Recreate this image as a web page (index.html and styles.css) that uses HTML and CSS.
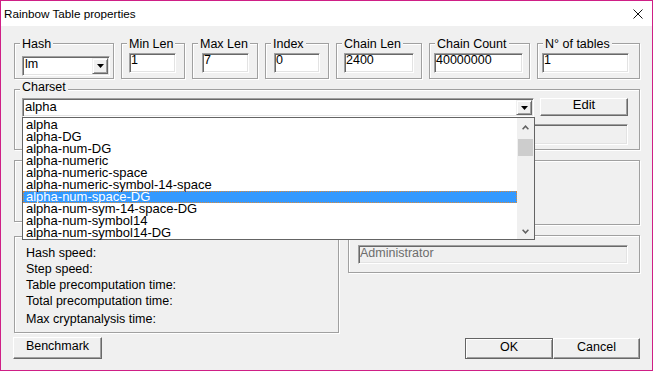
FILE: index.html
```html
<!DOCTYPE html>
<html>
<head>
<meta charset="utf-8">
<title>Rainbow Table properties</title>
<link rel="stylesheet" href="styles.css">
</head>
<body>
<div class="window">
  <div class="titlebar">
    <span class="title">Rainbow Table properties</span>
    <svg class="close" width="10" height="10" viewBox="0 0 10 10"><path d="M0.5 0.5 L9.5 9.5 M9.5 0.5 L0.5 9.5" stroke="#111" stroke-width="1" fill="none"/></svg>
  </div>
  <div class="content">
    <div class="params">
      <div class="group pgroup">
        <div class="legend">Hash</div>
        <div class="combo combo-hash">
          <span class="combo-text">lm</span>
          <span class="drop-btn"><svg width="7" height="4" viewBox="0 0 7 4"><path d="M0 0 H7 L3.5 4 Z" fill="#000"/></svg></span>
        </div>
      </div>
      <div class="group pgroup">
        <div class="legend">Min Len</div>
        <div class="field f-min">1</div>
      </div>
      <div class="group pgroup">
        <div class="legend">Max Len</div>
        <div class="field f-max">7</div>
      </div>
      <div class="group pgroup">
        <div class="legend">Index</div>
        <div class="field f-index">0</div>
      </div>
      <div class="group pgroup">
        <div class="legend">Chain Len</div>
        <div class="field f-chainlen">2400</div>
      </div>
      <div class="group pgroup">
        <div class="legend">Chain Count</div>
        <div class="field f-chaincount">40000000</div>
      </div>
      <div class="group pgroup">
        <div class="legend">N° of tables</div>
        <div class="field f-tables">1</div>
      </div>
    </div>

    <div class="group charset">
      <div class="legend legend-charset">Charset</div>
      <div class="charset-row">
        <div class="combo combo-charset">
          <span class="combo-text">alpha</span>
          <span class="drop-btn"><svg width="7" height="4" viewBox="0 0 7 4"><path d="M0 0 H7 L3.5 4 Z" fill="#000"/></svg></span>
          <div class="droplist">
            <div class="items">
              <div class="item">alpha</div>
              <div class="item">alpha-DG</div>
              <div class="item">alpha-num-DG</div>
              <div class="item">alpha-numeric</div>
              <div class="item">alpha-numeric-space</div>
              <div class="item">alpha-numeric-symbol-14-space</div>
              <div class="item sel">alpha-num-space-DG</div>
              <div class="item">alpha-num-sym-14-space-DG</div>
              <div class="item">alpha-num-symbol14</div>
              <div class="item">alpha-num-symbol14-DG</div>
            </div>
            <div class="scrollbar">
              <div class="sb-btn sb-up"><svg width="7" height="5" viewBox="0 0 7 5"><polyline points="0.6,4.2 3.5,1.2 6.4,4.2" fill="none" stroke="#606060" stroke-width="1.5"/></svg></div>
              <div class="thumb"></div>
              <div class="sb-btn sb-down"><svg width="7" height="5" viewBox="0 0 7 5"><polyline points="0.6,0.8 3.5,3.8 6.4,0.8" fill="none" stroke="#606060" stroke-width="1.5"/></svg></div>
            </div>
          </div>
        </div>
        <div class="btn btn-edit">Edit</div>
      </div>
      <div class="field readonly info-field"></div>
    </div>

    <div class="lower">
      <div class="col col-left">
        <div class="group box-a"></div>
        <div class="group box-b">
          <div class="stat">Hash speed:</div>
          <div class="stat">Step speed:</div>
          <div class="stat">Table precomputation time:</div>
          <div class="stat">Total precomputation time:</div>
          <div class="stat stat-last">Max cryptanalysis time:</div>
        </div>
      </div>
      <div class="col col-right">
        <div class="group box-c"></div>
        <div class="group box-d">
          <div class="field readonly admin">Administrator</div>
        </div>
      </div>
    </div>

    <div class="buttons">
      <div class="btn btn-bench">Benchmark</div>
      <div class="btn btn-ok">OK</div>
      <div class="btn btn-cancel">Cancel</div>
    </div>
  </div>
</div>
</body>
</html>
```

FILE: styles.css
```css
html, body {
  margin: 0;
  padding: 0;
  background: #f0f0f0;
}
body {
  font-family: "Liberation Sans", Arial, sans-serif;
  font-size: 12.5px;
  color: #000;
}
.window {
  width: 653px;
  height: 371px;
  box-sizing: border-box;
  border: 1px solid #cf1f86;
  background: #f0f0f0;
  display: flex;
  flex-direction: column;
  overflow: hidden;
}
.titlebar {
  flex: none;
  height: 25px;
  background: #fff;
  display: flex;
  align-items: center;
  justify-content: space-between;
  padding: 0 9px 0 3px;
}
.title {
  font-size: 11.7px;
  white-space: nowrap;
}
.close {
  display: block;
}
.content {
  flex: 1;
  padding: 17px 12px 0 13px;
}

/* group boxes */
.group {
  box-sizing: border-box;
  border: 1px solid #a0a0a0;
  box-shadow: 1px 1px 0 #fff, inset 1px 1px 0 #fff;
}
.legend {
  width: fit-content;
  height: 14px;
  line-height: 14px;
  margin: -7px 0 0 5px;
  padding: 0 2px;
  background: #f0f0f0;
  white-space: nowrap;
}
.legend-charset {
  margin-top: -10px;
}

.params {
  display: grid;
  grid-template-columns: 100px 64px 66px 64px 86px 101px 103px;
  column-gap: 7px;
}
.pgroup {
  height: 36px;
}

/* sunken edit fields */
.field {
  box-sizing: border-box;
  height: 20px;
  margin-top: 2px;
  background: #fff;
  border: 1px solid;
  border-color: #a0a0a0 #fff #fff #a0a0a0;
  box-shadow: inset 1px 1px 0 #696969, inset -1px -1px 0 #e3e3e3;
  padding: 1px 1px 0 1px;
  line-height: 10px;
  white-space: nowrap;
  overflow: hidden;
}
.f-min { margin-left: 7px; width: 47px; }
.f-max { margin-left: 9px; width: 47px; }
.f-index { margin-left: 8px; width: 46px; }
.f-chainlen { margin-left: 7px; width: 70px; }
.f-chaincount { margin-left: 4px; width: 89px; }
.f-tables { margin-left: 4px; width: 87px; }

.readonly {
  background: #f0f0f0;
}

/* combo boxes */
.combo {
  box-sizing: border-box;
  display: flex;
  background: #fff;
  border: 1px solid;
  border-color: #a0a0a0 #fff #fff #a0a0a0;
  box-shadow: inset 1px 1px 0 #696969, inset -1px -1px 0 #e3e3e3;
  padding: 1px;
}
.combo-text {
  flex: 1;
  line-height: 13px;
  padding-left: 1px;
  white-space: nowrap;
}
.combo-hash {
  width: 88px;
  height: 20px;
  margin: 5px 0 0 7px;
}
.drop-btn {
  box-sizing: border-box;
  width: 16px;
  background: #f0f0f0;
  border: 1px solid;
  border-color: #f0f0f0 #696969 #696969 #f0f0f0;
  box-shadow: inset 1px 1px 0 #fff, inset -1px -1px 0 #a0a0a0;
  display: flex;
  align-items: center;
  justify-content: center;
}
.drop-btn svg {
  display: block;
}

/* charset group */
.charset {
  margin-top: 10px;
  height: 61px;
}
.charset-row {
  display: flex;
  align-items: flex-start;
  gap: 6px;
  margin: 4px 0 0 7px;
}
.combo-charset {
  position: relative;
  width: 512px;
  height: 19px;
  font-size: 13px;
}
.combo-charset .combo-text {
  line-height: 13px;
}
.info-field {
  width: 300px;
  height: 21px;
  margin: 7px 11px 0 auto;
}

/* dropdown list */
.droplist {
  position: absolute;
  left: -1px;
  top: 18px;
  z-index: 5;
  box-sizing: border-box;
  width: 513px;
  height: 123px;
  border: 1px solid #646464;
  background: #fff;
  display: flex;
}
.items {
  flex: 1;
  padding-top: 1px;
  font-size: 13px;
}
.item {
  height: 12px;
  line-height: 12px;
  padding-left: 3px;
  white-space: nowrap;
}
.item.sel {
  background: #3399ff;
  color: #fff;
  outline: 1px dotted #d98a3c;
  outline-offset: -1px;
}
.scrollbar {
  width: 17px;
  background: #f0f0f0;
  display: flex;
  flex-direction: column;
}
.sb-btn {
  height: 17px;
  display: flex;
  align-items: center;
  justify-content: center;
}
.sb-btn svg {
  display: block;
}
.sb-up {
  padding-top: 2px;
  box-sizing: border-box;
}
.sb-down {
  margin-top: auto;
  padding-top: 1px;
  box-sizing: border-box;
}
.thumb {
  margin: 4px 0 0 1px;
  width: 15px;
  height: 17px;
  background: #cdcdcd;
}

/* buttons */
.btn {
  box-sizing: border-box;
  background: #f0f0f0;
  border: 1px solid;
  border-color: #fff #696969 #696969 #fff;
  box-shadow: inset -1px -1px 0 #a0a0a0;
  text-align: center;
  white-space: nowrap;
}
.btn-edit {
  width: 88px;
  height: 18px;
  line-height: 12px;
  font-size: 13px;
}
.btn-bench {
  width: 89px;
  height: 22px;
  line-height: 17px;
  margin-left: -1px;
}
.btn-ok {
  width: 88px;
  height: 21px;
  line-height: 17px;
  margin-left: auto;
  border-color: #646464;
  box-shadow: inset 1px 1px 0 #fff, inset -1px -1px 0 #a0a0a0;
}
.btn-cancel {
  width: 87px;
  height: 21px;
  line-height: 17px;
}

/* lower area */
.lower {
  display: flex;
  gap: 9px;
  margin-top: 10px;
  height: 173px;
}
.col {
  display: flex;
  flex-direction: column;
}
.col-left {
  width: 325px;
}
.col-right {
  width: 292px;
}
.box-a {
  height: 62px;
}
.box-b {
  height: 97px;
  margin-top: 14px;
  padding: 8px 0 0 11px;
}
.stat {
  line-height: 16px;
  white-space: nowrap;
}
.stat-last {
  margin-top: 2px;
}
.box-c {
  height: 65px;
}
.box-d {
  height: 38px;
  margin-top: 10px;
}
.admin {
  width: 270px;
  height: 19px;
  margin: 9px 0 0 9px;
  line-height: 12px;
  color: #6d6d6d;
}

.buttons {
  display: flex;
  align-items: flex-end;
  margin-top: 4px;
}
```
